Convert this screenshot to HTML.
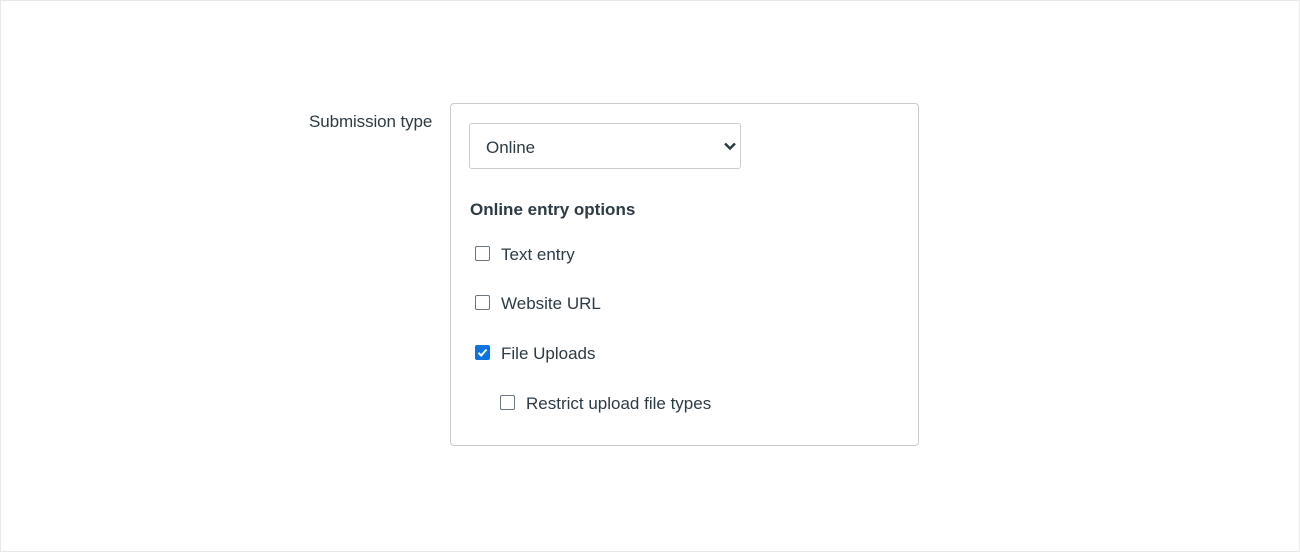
<!DOCTYPE html>
<html><head><style>
body{margin:0;width:1300px;height:552px;background:#fff;font-family:"Liberation Sans",sans-serif;color:#2d3b45;position:relative;overflow:hidden}
.frame{position:absolute;left:0;top:0;width:1298px;height:550px;border:1px solid #e6e9ec}
.a{position:absolute;white-space:nowrap;font-size:17px;line-height:20px}
.box{position:absolute;left:450px;top:103px;width:467px;height:341px;border:1px solid #c7cdd1;border-radius:4px}
.sel{position:absolute;left:469px;top:123px;width:270px;height:44px;border:1px solid #c7cdd1;border-radius:3px}
.cb{position:absolute;width:13px;height:13px;border:1.5px solid #6b7780;border-radius:2px;background:#fff}
.cb.on{background:#0b74de;border-color:#0b74de}
</style></head><body>
<div class="frame"></div>
<div class="a" style="left:309px;top:112px;letter-spacing:-0.1px">Submission type</div>
<div class="box"></div>
<div class="sel"></div>
<div class="a" style="left:486px;top:138px">Online</div>
<svg style="position:absolute;left:723px;top:141px" width="14" height="10" viewBox="0 0 14 10"><path d="M2 2.5L7 7.5L12 2.5" fill="none" stroke="#2d3b45" stroke-width="2.4"/></svg>
<div class="a" style="left:470px;top:200px;font-weight:bold">Online entry options</div>
<div class="cb" style="left:475px;top:246px"></div>
<div class="a" style="left:501px;top:245px">Text entry</div>
<div class="cb" style="left:475px;top:295px"></div>
<div class="a" style="left:501px;top:294px">Website URL</div>
<div class="cb on" style="left:475px;top:345px"><svg width="13" height="13" viewBox="0 0 13 13" style="position:absolute;left:0;top:0"><path d="M2.5 6.8L5.2 9.5L10.5 3.5" fill="none" stroke="#fff" stroke-width="2"/></svg></div>
<div class="a" style="left:501px;top:344px">File Uploads</div>
<div class="cb" style="left:500px;top:395px"></div>
<div class="a" style="left:526px;top:394px">Restrict upload file types</div>
</body></html>
